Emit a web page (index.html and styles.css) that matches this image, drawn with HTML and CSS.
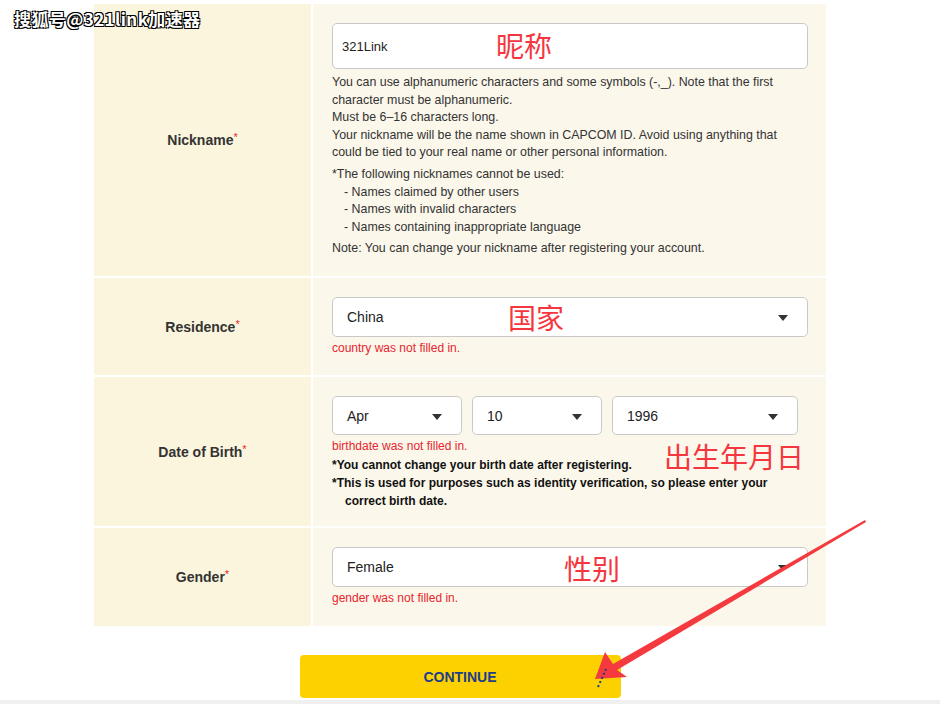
FILE: index.html
```html
<!DOCTYPE html>
<html lang="en">
<head>
    <meta charset="UTF-8">
    <meta name="viewport" content="width=device-width, initial-scale=1.0">
    <title>CAPCOM ID - Register</title>
    <link rel="stylesheet" href="styles.css">
</head>
<body>
    <div class="page">
        <div class="form">
            <!-- Nickname -->
            <div class="label">Nickname<span class="req">*</span></div>
            <div class="field">
                <div class="text-input">321Link</div>
                <div class="help">
                    <p>You can use alphanumeric characters and some symbols (-,_). Note that the first character must be alphanumeric.<br>Must be 6–16 characters long.<br>Your nickname will be the name shown in CAPCOM ID. Avoid using anything that could be tied to your real name or other personal information.</p>
                    <p>*The following nicknames cannot be used:<br>
                        <span class="indent">- Names claimed by other users</span><br>
                        <span class="indent">- Names with invalid characters</span><br>
                        <span class="indent">- Names containing inappropriate language</span></p>
                    <p>Note: You can change your nickname after registering your account.</p>
                </div>
            </div>

            <!-- Residence -->
            <div class="label">Residence<span class="req">*</span></div>
            <div class="field">
                <div class="select">China</div>
                <div class="error">country was not filled in.</div>
            </div>

            <!-- Date of birth -->
            <div class="label">Date of Birth<span class="req">*</span></div>
            <div class="field field-dob">
                <div class="dob">
                    <div class="select month">Apr</div>
                    <div class="select day">10</div>
                    <div class="select year">1996</div>
                </div>
                <div class="error">birthdate was not filled in.</div>
                <div class="notes">
                    <p>*You cannot change your birth date after registering.</p>
                    <p>*This is used for purposes such as identity verification, so please enter your correct birth date.</p>
                </div>
            </div>

            <!-- Gender -->
            <div class="label">Gender<span class="req">*</span></div>
            <div class="field field-gender">
                <div class="select">Female</div>
                <div class="error">gender was not filled in.</div>
            </div>
        </div>

        <div class="actions">
            <button class="continue">CONTINUE
                <svg class="chev" width="12" height="24" viewBox="0 0 12 24">
                    <line x1="2" y1="22" x2="10" y2="4" stroke="#1c3c8c" stroke-width="2" stroke-dasharray="2 2.5"/>
                </svg>
            </button>
        </div>
        <div class="footer"></div>
    </div>

    <!-- overlays: watermark + red annotations -->
    <div class="watermark">搜狐号@321link加速器</div>
    <div class="note note-nick">昵称</div>
    <div class="note note-country">国家</div>
    <div class="note note-dob">出生年月日</div>
    <div class="note note-gender">性别</div>
    <svg class="arrow" width="940" height="704" viewBox="0 0 940 704">
        <polygon points="595,679 605,652 613,664 865,520 866,522 617,670 627,677" fill="#f43a3e"/>
    </svg>
</body>
</html>
```

FILE: styles.css
```css
* {
    margin: 0;
    padding: 0;
    box-sizing: border-box;
}
body {
    font-family: "Liberation Sans", Arial, sans-serif;
    color: #333;
    background: #fff;
    width: 940px;
    height: 704px;
    overflow: hidden;
    position: relative;
}
.page {
    padding-top: 4px;
    margin-left: 94px;
    width: 732px;
}
.form {
    display: grid;
    grid-template-columns: 217px 513px;
    gap: 2px;
}
.label {
    background-color: #fcf5dd;
    display: flex;
    align-items: center;
    justify-content: center;
    font-weight: bold;
    font-size: 14px;
    color: #333;
}
.req {
    color: #e8242f;
    font-weight: normal;
    font-size: 11px;
    position: relative;
    top: -3px;
}
.field {
    background-color: #fbf7eb;
    padding: 19px 18px 18px 19px;
}
.text-input {
    height: 46px;
    border: 1px solid #c9c9c9;
    border-radius: 5px;
    background: #fff;
    padding: 0 9px;
    font-size: 13px;
    color: #222;
    display: flex;
    align-items: center;
}
.help {
    margin-top: 5px;
    font-size: 12.4px;
    line-height: 17.6px;
    color: #333;
}
.help p + p {
    margin-top: 4px;
}
.help .indent {
    padding-left: 12px;
}
.select {
    position: relative;
    height: 40px;
    border: 1px solid #c9c9c9;
    border-radius: 5px;
    background: #fff;
    padding-left: 14px;
    font-size: 14px;
    color: #222;
    display: flex;
    align-items: center;
}
.select::after {
    content: "";
    position: absolute;
    right: 19px;
    top: 50%;
    margin-top: -2px;
    border-left: 5px solid transparent;
    border-right: 5px solid transparent;
    border-top: 6px solid #333;
}
.error {
    color: #e8242f;
    font-size: 12px;
    line-height: 17.5px;
    margin-top: 3px;
}
.field-dob {
    padding-bottom: 16px;
}
.field-gender {
    padding-bottom: 19px;
}
.dob {
    display: flex;
    gap: 10px;
}
.dob .select {
    height: 39px;
}
.dob .month,
.dob .day {
    width: 130px;
}
.dob .year {
    width: 186px;
}
.notes {
    font-size: 12px;
    font-weight: bold;
    line-height: 18px;
    color: #111;
}
.notes p {
    padding-left: 13px;
    text-indent: -13px;
}
.actions {
    display: flex;
    justify-content: center;
    margin-top: 29px;
}
.continue {
    position: relative;
    width: 321px;
    height: 43px;
    background-color: #fdd100;
    border: none;
    border-radius: 4px;
    color: #1c3c8c;
    font-family: "Liberation Sans", Arial, sans-serif;
    font-weight: bold;
    font-size: 14px;
}
.chev {
    position: absolute;
    right: 13px;
    top: 10px;
    z-index: 2;
}
.footer {
    margin-top: 2px;
    margin-left: -94px;
    width: 940px;
    height: 10px;
    background-color: #f0f0f0;
}
.watermark {
    position: absolute;
    left: 14px;
    top: 8px;
    font-family: "Noto Sans CJK SC", sans-serif;
    font-weight: bold;
    font-size: 17px;
    letter-spacing: 0.4px;
    line-height: 22px;
    color: #fff;
    text-shadow: 1px 1px 0 #000, -1px -1px 0 #000, 1px -1px 0 #000, -1px 1px 0 #000;
}
.note {
    position: absolute;
    font-family: "Noto Sans CJK SC", sans-serif;
    font-size: 28px;
    line-height: 28px;
    color: #f5363f;
}
.note-nick { left: 496px; top: 31px; }
.note-country { left: 508px; top: 303px; }
.note-dob { left: 664px; top: 442px; }
.note-gender { left: 564px; top: 554px; }
.arrow {
    position: absolute;
    left: 0;
    top: 0;
    pointer-events: none;
}
```
